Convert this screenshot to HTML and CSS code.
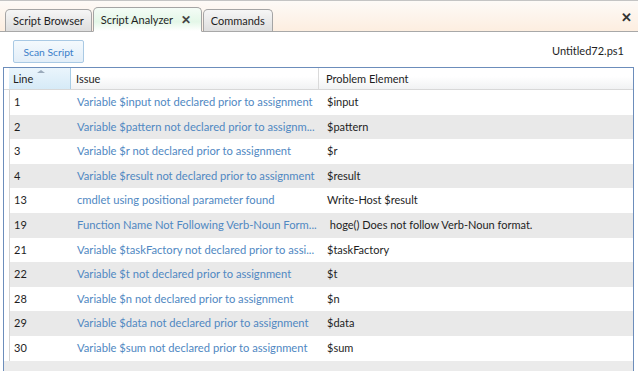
FILE: index.html
```html
<!DOCTYPE html>
<html>
<head>
  <meta charset="UTF-8">
  <title>Script Analyzer</title>
  <link rel="stylesheet" href="styles.css">
</head>
<body>
  <div class="tab-bar">
    <div class="tabs">
      <div class="tab">Script Browser</div>
      <div class="tab active">Script Analyzer <span class="tab-close">&#x2715;</span></div>
      <div class="tab">Commands</div>
    </div>
    <div class="pane-close">&#x2715;</div>
  </div>

  <div class="toolbar">
    <button class="scan-btn">Scan Script</button>
    <span class="file-name">Untitled72.ps1</span>
  </div>

  <div class="grid">
    <div class="grid-head">
      <div class="gutter"></div>
      <div class="cell col-line sorted">Line<span class="sort-arrow"></span></div>
      <div class="cell col-issue">Issue</div>
      <div class="cell col-elem">Problem Element</div>
    </div>

    <div class="row">
      <div class="gutter"></div>
      <div class="cell col-line">1</div>
      <div class="cell col-issue">Variable $input not declared prior to assignment</div>
      <div class="cell col-elem">$input</div>
    </div>
    <div class="row alt">
      <div class="gutter"></div>
      <div class="cell col-line">2</div>
      <div class="cell col-issue">Variable $pattern not declared prior to assignm...</div>
      <div class="cell col-elem">$pattern</div>
    </div>
    <div class="row">
      <div class="gutter"></div>
      <div class="cell col-line">3</div>
      <div class="cell col-issue">Variable $r not declared prior to assignment</div>
      <div class="cell col-elem">$r</div>
    </div>
    <div class="row alt">
      <div class="gutter"></div>
      <div class="cell col-line">4</div>
      <div class="cell col-issue">Variable $result not declared prior to assignment</div>
      <div class="cell col-elem">$result</div>
    </div>
    <div class="row">
      <div class="gutter"></div>
      <div class="cell col-line">13</div>
      <div class="cell col-issue">cmdlet using positional parameter found</div>
      <div class="cell col-elem">Write-Host $result</div>
    </div>
    <div class="row alt">
      <div class="gutter"></div>
      <div class="cell col-line">19</div>
      <div class="cell col-issue">Function Name Not Following Verb-Noun Form...</div>
      <div class="cell col-elem">&nbsp;hoge() Does not follow Verb-Noun format.</div>
    </div>
    <div class="row">
      <div class="gutter"></div>
      <div class="cell col-line">21</div>
      <div class="cell col-issue">Variable $taskFactory not declared prior to assi...</div>
      <div class="cell col-elem">$taskFactory</div>
    </div>
    <div class="row alt">
      <div class="gutter"></div>
      <div class="cell col-line">22</div>
      <div class="cell col-issue">Variable $t not declared prior to assignment</div>
      <div class="cell col-elem">$t</div>
    </div>
    <div class="row">
      <div class="gutter"></div>
      <div class="cell col-line">28</div>
      <div class="cell col-issue">Variable $n not declared prior to assignment</div>
      <div class="cell col-elem">$n</div>
    </div>
    <div class="row alt">
      <div class="gutter"></div>
      <div class="cell col-line">29</div>
      <div class="cell col-issue">Variable $data not declared prior to assignment</div>
      <div class="cell col-elem">$data</div>
    </div>
    <div class="row">
      <div class="gutter"></div>
      <div class="cell col-line">30</div>
      <div class="cell col-issue">Variable $sum not declared prior to assignment</div>
      <div class="cell col-elem">$sum</div>
    </div>
  </div>
</body>
</html>
```

FILE: styles.css
```css
body {
  margin: 0;
  width: 638px;
  height: 371px;
  overflow: hidden;
  background-color: #fff;
  font-family: Lato, "Open Sans", sans-serif;
  font-size: 11px;
  color: #1e1e1e;
}
/* Tab strip */
.tab-bar {
  display: flex;
  justify-content: space-between;
  align-items: flex-end;
  height: 30px;
  border-top: 1px solid #c4c4c4;
  border-bottom: 1px solid #a8a8a8;
  background: linear-gradient(to bottom, #fdfaf7, #fdeee0);
}
.tabs {
  display: flex;
  align-items: flex-end;
  gap: 1px;
  padding-left: 5px;
  margin-bottom: -1px;
}
.tab {
  height: 21px;
  padding: 0 7px;
  line-height: 21px;
  border: 1px solid #a4a4a4;
  border-bottom-color: #a8a8a8;
  border-radius: 5px 5px 0 0;
  background: linear-gradient(to bottom, #f6f6f6, #dedede);
  white-space: nowrap;
}
.tab.active {
  height: 23px;
  line-height: 24px;
  padding-right: 10px;
  border-bottom-color: #fff;
  background: linear-gradient(to bottom, #f4fcf6, #e4f7e8 60%, #fff);
}
.tab-close {
  margin-left: 5px;
  font-weight: bold;
  font-size: 12px;
  color: #444;
}
.pane-close {
  padding: 0 6px 6px 0;
  font-size: 13px;
  font-weight: bold;
  color: #333;
}
/* Toolbar */
.toolbar {
  display: flex;
  justify-content: space-between;
  align-items: flex-start;
  height: 35px;
  padding: 8px 14px 0 13px;
  box-sizing: border-box;
}
.scan-btn {
  width: 71px;
  height: 23px;
  padding: 0;
  font-family: inherit;
  font-size: 10.3px;
  color: #3d7fc9;
  border: 1px solid #a9c9e4;
  border-radius: 2px;
  background: linear-gradient(to bottom, #f4f9fd, #e2eef8);
}
.file-name {
  margin-top: 4px;
}
/* Grid */
.grid {
  margin: 0 4px 0 3px;
  height: 320px;
  border: 1px solid #6c8dbb;
  border-bottom: none;
  background-color: #ebebeb;
}
.grid-head,
.row {
  display: flex;
}
.grid-head {
  height: 21px;
  border-bottom: 1px solid #d8d8d8;
  background: linear-gradient(to bottom, #fff 40%, #f1f2f3);
}
.grid-head .cell {
  line-height: 22px;
  border-right: 1px solid #dadada;
}
.grid-head .gutter {
  border-right: none;
}
.grid-head .col-elem {
  border-right: none;
}
.grid-head .sorted {
  position: relative;
  background: linear-gradient(to bottom, #eaf5fc, #d6eaf7);
  border-right-color: #a9cde5;
}
.sort-arrow {
  position: absolute;
  left: 28px;
  top: 2px;
  border-left: 4px solid transparent;
  border-right: 4px solid transparent;
  border-bottom: 3px solid #9aaabb;
}
.gutter {
  width: 5px;
  flex: none;
  border-right: 1px solid #d4d4d4;
  background-color: #fff;
}
.row {
  height: 24.6px;
  background-color: #fff;
}
.row.alt {
  background-color: #e9e9e9;
}
.row .cell {
  line-height: 24px;
}
.cell {
  flex: none;
  box-sizing: border-box;
  white-space: nowrap;
  overflow: hidden;
}
.col-line {
  width: 62px;
  padding-left: 4px;
}
.col-issue {
  width: 248px;
  padding-left: 5px;
}
.row .col-issue {
  font-size: 11.2px;
  color: #5088c2;
}
.col-elem {
  width: 312px;
  padding-left: 7px;
}
```
